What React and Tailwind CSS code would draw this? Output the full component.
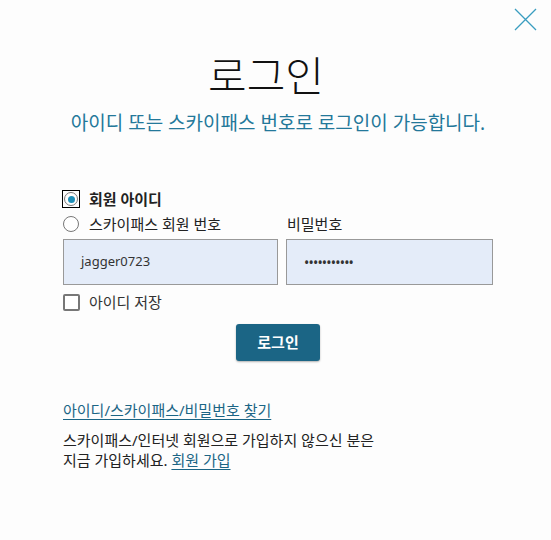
export default function App() {
  const font = { fontFamily: '"Noto Sans", "Noto Sans CJK KR", sans-serif' };
  return (
    <div className="w-[551px] h-[540px] bg-[#fdfdfd] relative text-[#222]" style={font}>
      <button className="absolute left-[514px] top-[8px] w-[23px] h-[23px]" aria-label="close">
        <svg width="23" height="23" viewBox="0 0 23 23">
          <path d="M1 1 L22 22 M22 1 L1 22" stroke="#3a9dc0" strokeWidth="1.3" fill="none" />
        </svg>
      </button>
      <div className="pl-[63px] pr-[58px] pt-[48px]">
        <h1 className="text-center pr-[24px] text-[42px] leading-[56px] font-light text-[#111]">로그인</h1>
        <p className="mt-[6px] text-center text-[19px] leading-[26px] text-[#23789a] whitespace-nowrap">아이디 또는 스카이패스 번호로 로그인이 가능합니다.</p>
        <div className="mt-[53px] flex flex-col">
          <label className="flex items-center gap-[10px] h-[20px]">
            <span className="w-[16px] h-[16px] outline outline-1 outline-black flex items-center justify-center">
              <span className="w-[14px] h-[14px] rounded-full border border-[#777] flex items-center justify-center bg-white">
                <span className="w-[7px] h-[7px] rounded-full bg-[#1f8fb8]"></span>
              </span>
            </span>
            <span className="text-[15px] font-bold text-[#222]">회원 아이디</span>
          </label>
          <div className="mt-[5px] flex h-[20px] items-center">
            <label className="flex items-center gap-[10px] w-[223px]">
              <span className="w-[16px] h-[16px] rounded-full border border-[#777] bg-white"></span>
              <span className="text-[15px] text-[#222]">스카이패스 회원 번호</span>
            </label>
            <span className="text-[15px] text-[#222] ml-[1px]">비밀번호</span>
          </div>
          <div className="mt-[5px] flex gap-[8px]">
            <div className="w-[216px] h-[46px] bg-[#e4ecf9] border border-[#999] flex items-center pl-[17px] text-[13px] text-[#333]">jagger0723</div>
            <div className="w-[208px] h-[46px] bg-[#e4ecf9] border border-[#999] flex items-center pl-[17px] text-[14px] text-[#333] tracking-[-0.8px]">•••••••••••</div>
          </div>
          <label className="mt-[7px] flex items-center gap-[9px] h-[20px]">
            <span className="w-[17px] h-[17px] border-2 border-[#777] rounded-[2px] bg-white"></span>
            <span className="text-[15px] text-[#333]">아이디 저장</span>
          </label>
          <div className="mt-[12px] flex justify-center">
            <button className="w-[84px] h-[37px] rounded-[3px] bg-[#1b6585] text-white text-[15px] font-semibold shadow-[0_1px_2px_rgba(0,0,0,0.3)]">로그인</button>
          </div>
          <a href="#" className="mt-[38px] text-[15px] text-[#1b6585] underline underline-offset-[3px]">아이디/스카이패스/비밀번호 찾기</a>
          <p className="mt-[8px] text-[15px] leading-[20px] text-[#222]">
            스카이패스/인터넷 회원으로 가입하지 않으신 분은<br />
            지금 가입하세요. <a href="#" className="text-[#1b6585] underline underline-offset-[3px]">회원 가입</a>
          </p>
        </div>
      </div>
    </div>
  );
}
